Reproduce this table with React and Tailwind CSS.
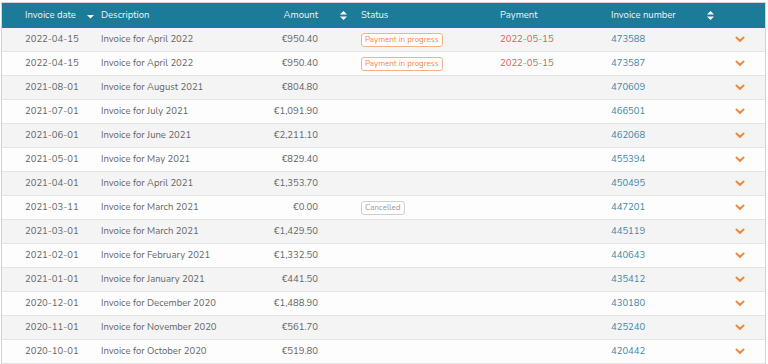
import React from 'react'

const rows = [
  { date: '2022-04-15', desc: 'Invoice for April 2022', amount: '€950.40', status: 'progress', payment: '2022-05-15', num: '473588' },
  { date: '2022-04-15', desc: 'Invoice for April 2022', amount: '€950.40', status: 'progress', payment: '2022-05-15', num: '473587' },
  { date: '2021-08-01', desc: 'Invoice for August 2021', amount: '€804.80', num: '470609' },
  { date: '2021-07-01', desc: 'Invoice for July 2021', amount: '€1,091.90', num: '466501' },
  { date: '2021-06-01', desc: 'Invoice for June 2021', amount: '€2,211.10', num: '462068' },
  { date: '2021-05-01', desc: 'Invoice for May 2021', amount: '€829.40', num: '455394' },
  { date: '2021-04-01', desc: 'Invoice for April 2021', amount: '€1,353.70', num: '450495' },
  { date: '2021-03-11', desc: 'Invoice for March 2021', amount: '€0.00', status: 'cancelled', num: '447201' },
  { date: '2021-03-01', desc: 'Invoice for March 2021', amount: '€1,429.50', num: '445119' },
  { date: '2021-02-01', desc: 'Invoice for February 2021', amount: '€1,332.50', num: '440643' },
  { date: '2021-01-01', desc: 'Invoice for January 2021', amount: '€441.50', num: '435412' },
  { date: '2020-12-01', desc: 'Invoice for December 2020', amount: '€1,488.90', num: '430180' },
  { date: '2020-11-01', desc: 'Invoice for November 2020', amount: '€561.70', num: '425240' },
  { date: '2020-10-01', desc: 'Invoice for October 2020', amount: '€519.80', num: '420442' },
]

function SortBoth() {
  return (
    <svg width="7" height="9" viewBox="0 0 7 9" fill="white">
      <path d="M3.5 0L7 3.6H0z" />
      <path d="M3.5 9L7 5.4H0z" />
    </svg>
  )
}

function SortDown() {
  return (
    <svg width="7" height="5" viewBox="0 0 7 5" fill="white">
      <path d="M0 1h7L3.5 4.6z" />
    </svg>
  )
}

function Chevron() {
  return (
    <svg width="10" height="7" viewBox="0 0 10 7" fill="none" stroke="#f5883a" strokeWidth="2" strokeLinecap="round" strokeLinejoin="round">
      <path d="M1.5 1.5L5 5l3.5-3.5" />
    </svg>
  )
}

export default function App() {
  return (
    <div className="w-[768px] h-[364px] overflow-hidden bg-white" style={{ fontFamily: '"Nunito", Lato, "Open Sans", sans-serif' }}>
      <div className="mt-[2px] ml-[1px] w-[765px] border-l border-t border-r border-[#d4d4d4] text-[9.5px] whitespace-nowrap">
        <div className="flex h-[25px] items-center bg-[#1b7b98] text-[#eef5f8]">
          <div className="w-[93px] pl-[23px] flex items-center">
            <span>Invoice date</span>
            <span className="ml-[11px] mt-[2px]"><SortDown /></span>
          </div>
          <div className="w-[135px] pl-[6px]">Description</div>
          <div className="w-[88px] text-right">Amount</div>
          <div className="w-[37px] pl-[22px] flex items-center"><SortBoth /></div>
          <div className="w-[139px] pl-[6px]">Status</div>
          <div className="w-[111px] pl-[6px]">Payment</div>
          <div className="w-[125px] pl-[6px] flex items-center">
            <span>Invoice number</span>
            <span className="ml-auto mr-[16px] flex items-center"><SortBoth /></span>
          </div>
          <div className="flex-1" />
        </div>
        {rows.map((r, i) => (
          <div
            key={i}
            className={`flex h-[24px] items-center border-b border-[#e4e4e4] text-[#666666] ${i % 2 === 0 ? 'bg-[#f4f4f4]' : 'bg-[#fdfdfd]'}`}
          >
            <div className="w-[93px] pl-[23px]">{r.date}</div>
            <div className="w-[135px] pl-[6px]">{r.desc}</div>
            <div className="w-[88px] text-right">{r.amount}</div>
            <div className="w-[37px]" />
            <div className="w-[139px] pl-[6px] flex items-center">
              {r.status === 'progress' && (
                <span className="border border-[#f9b184] text-[#f38645] rounded-[3px] px-[3px] h-[14px] leading-[12px] text-[8px] bg-white">
                  Payment in progress
                </span>
              )}
              {r.status === 'cancelled' && (
                <span className="border border-[#cfcfcf] text-[#9a9a9a] rounded-[3px] px-[3px] h-[14px] leading-[12px] text-[8px] bg-white">
                  Cancelled
                </span>
              )}
            </div>
            <div className="w-[111px] pl-[6px] text-[#e45b59]">{r.payment || ''}</div>
            <div className="w-[125px] pl-[6px] text-[#4688a5]">{r.num}</div>
            <div className="flex-1 flex items-center pl-[5px]"><Chevron /></div>
          </div>
        ))}
      </div>
    </div>
  )
}
